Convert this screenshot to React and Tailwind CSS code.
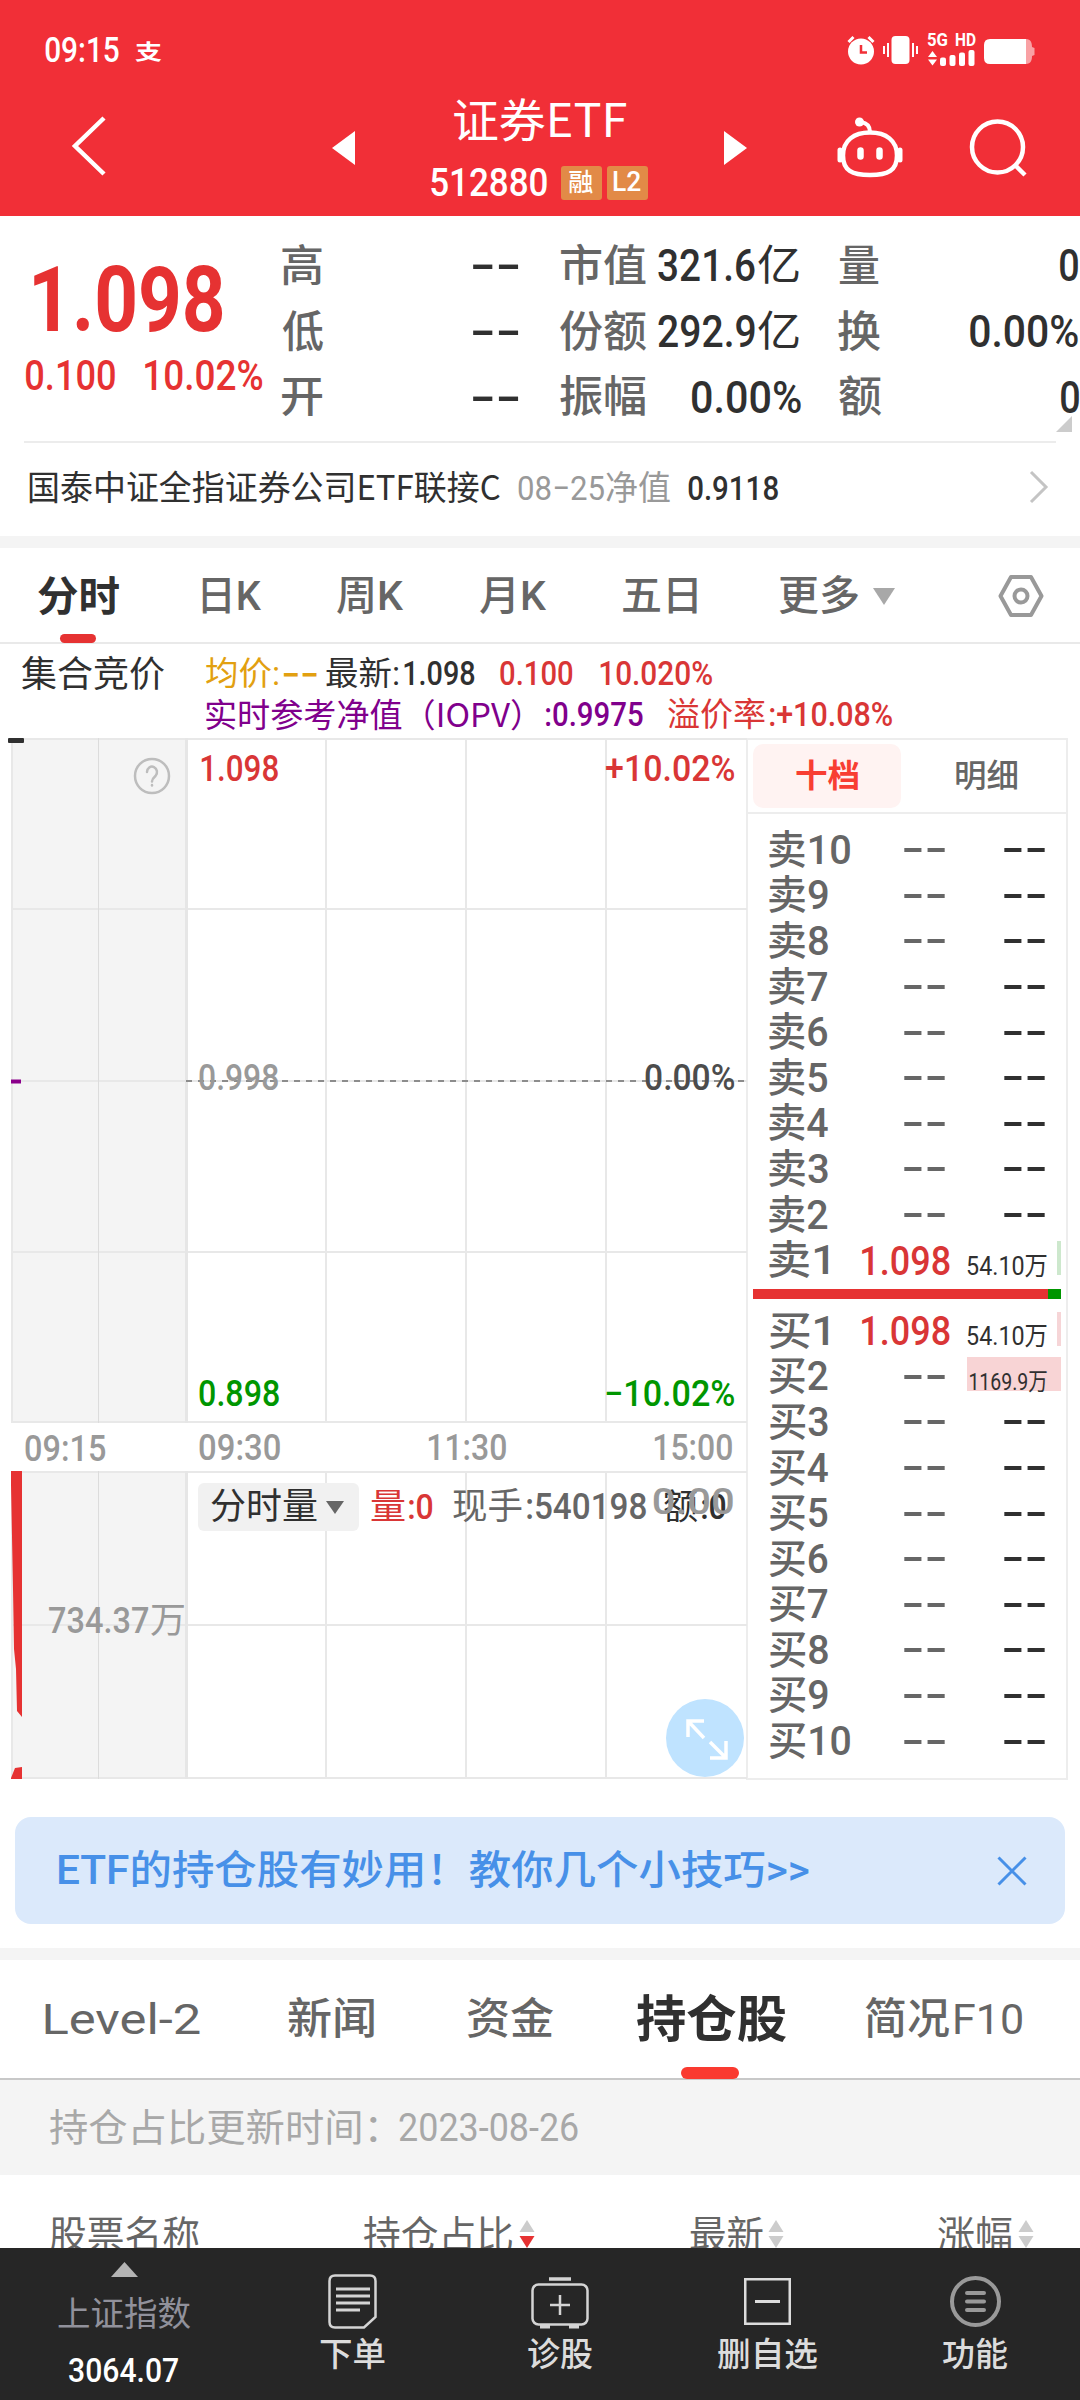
import React, { useLayoutEffect, useRef } from "react";

// Single line of text whose drawn glyphs span exactly the width set on it.
function Fit({ className = "", children }) {
  const box = useRef(null);
  const ink = useRef(null);
  useLayoutEffect(() => {
    const cs = getComputedStyle(ink.current);
    const ctx = document.createElement("canvas").getContext("2d");
    ctx.font = `${cs.fontWeight} ${cs.fontSize} ${cs.fontFamily}`;
    const m = ctx.measureText(children);
    const k = box.current.offsetWidth / (m.actualBoundingBoxLeft + m.actualBoundingBoxRight);
    ink.current.style.transform = `translateX(${m.actualBoundingBoxLeft * k}px) scaleX(${k})`;
  }, [children]);
  return (
    <span ref={box} className={`flex shrink-0 whitespace-nowrap leading-none ${className}`}>
      <span ref={ink} className="inline-block origin-left">{children}</span>
    </span>
  );
}

function StatusIcons() {
  return (
    <svg className="ml-[711px] h-[34px] w-[190px] shrink-0" viewBox="0 0 190 34" fill="#fff">
      <circle cx="14" cy="18.500" r="13" />
      <path d="M1.500 9l5-5M26.500 9l-5-5" stroke="#fff" strokeWidth="3" />
      <path d="M14 12v7.500h6" stroke="#f12f37" strokeWidth="2.500" fill="none" />
      <rect x="44.500" y="3" width="18" height="28" rx="4" />
      <path d="M41 10v14M37 13v8M66 10v14M70 13v8" stroke="#fff" strokeWidth="2" />
      <text x="80" y="13" fontFamily="Roboto" fontWeight="700" fontSize="18" textLength="21" lengthAdjust="spacingAndGlyphs">5G</text>
      <text x="108" y="13" fontFamily="Roboto" fontWeight="700" fontSize="18" textLength="21" lengthAdjust="spacingAndGlyphs">HD</text>
      <path d="M81 24l4.500-6 4.500 6zM81 26.500l4.500 6 4.500-6z" />
      <rect x="93" y="24.500" width="6" height="8.500" rx="2" />
      <rect x="102.500" y="22" width="6" height="11" rx="2" />
      <rect x="112" y="19.500" width="6" height="13.500" rx="2" />
      <rect x="121.500" y="17" width="6" height="16" rx="2" />
      <path d="M178 6h1c5 0 6 4 6 8l2.500 1v7l-2.500 1c0 4-1 8-6 8h-1z" opacity=".55" />
      <path d="M143 6h36v25h-36q-6 0-6-6v-13q0-6 6-6z" />
    </svg>
  );
}

function Header() {
  return (
    <header className="h-[216px] bg-[#f12f37] text-white">
      <div className="flex h-[100px] items-center">
        <Fit className="ml-[45px] w-[74px] text-[35px] font-medium">09:15</Fit>
        <Fit className="ml-[16px] w-[27px] font-['Noto_Sans_CJK_SC'] text-[21px] font-bold">支</Fit>
        <div className="-ml-[26px] flex"><StatusIcons /></div>
      </div>
      <div className="flex h-[116px] items-start">
        <svg className="ml-[70px] mt-[15px] h-[62px] w-[38px] shrink-0" viewBox="0 0 38 62" fill="none" stroke="#fff" strokeWidth="4.500">
          <path d="M34 3L5 31l29 28" />
        </svg>
        <svg className="ml-[224px] mt-[31px] h-[34px] w-[23px] shrink-0" viewBox="0 0 23 34" fill="#fff"><path d="M23 0v34L0 17z" /></svg>
        <div className="ml-[75px] flex w-[218px] shrink-0 flex-col">
          <Fit className="ml-[24px] -mt-[9px] h-[52px] w-[173px] items-center font-['Noto_Sans_CJK_SC'] text-[46px]">证券ETF</Fit>
          <div className="ml-px mt-[23px] flex h-[33px] items-center">
            <Fit className="w-[116px] text-[38px] font-medium">512880</Fit>
            <span className="ml-[14px] flex h-[34px] w-[42px] items-center justify-center rounded-[3px] bg-[#e28a47]">
              <Fit className="w-[24px] text-[25px] font-medium">融</Fit>
            </span>
            <span className="ml-[5px] flex h-[34px] w-[43px] items-center justify-center rounded-[3px] bg-[#e28a47]">
              <Fit className="w-[28px] text-[27px] font-medium">L2</Fit>
            </span>
          </div>
        </div>
        <svg className="ml-[76px] mt-[31px] h-[34px] w-[23px] shrink-0" viewBox="0 0 23 34" fill="#fff"><path d="M0 0v34l23-17z" /></svg>
        <svg className="ml-[88px] mt-[17px] h-[62px] w-[70px] shrink-0" viewBox="0 0 70 62" fill="none" stroke="#fff" strokeWidth="4.500">
          <path d="M35 15.500c16 0 27 8 27 23s-9 19.500-27 19.500S8 53.500 8 38.500s11-23 27-23z" />
          <path d="M35 15c0-6-3-9-9-10" strokeWidth="4" />
          <circle cx="24.500" cy="5" r="4.500" fill="#fff" stroke="none" />
          <path d="M25.500 33.500v6M44.500 33.500v6" strokeWidth="6.500" strokeLinecap="round" />
          <path d="M5 33v10M65 33v10" strokeWidth="5" strokeLinecap="round" />
        </svg>
        <svg className="ml-[64px] mt-[18px] h-[60px] w-[60px] shrink-0" viewBox="0 0 60 60" fill="none" stroke="#fff" strokeWidth="4.500">
          <circle cx="28.500" cy="29" r="25.500" /><path d="M46 47l10 10" />
        </svg>
      </div>
    </header>
  );
}

const dash = "font-['Noto_Sans_CJK_SC'] font-bold";

function Quote() {
  const lab = "text-[43px] font-medium text-[#666]";
  const val = "text-[44px] font-medium text-[#303030]";
  const none = `mb-[10px] w-[46px] text-[42px] text-[#303030] ${dash}`;
  return (
    <section className="relative h-[225px] overflow-hidden border-b-2 border-transparent">
      <div className="flex">
        <div className="w-[282px] shrink-0 text-[#e63232]">
          <Fit className="ml-[34px] mt-[39px] w-[189px] text-[91px] font-bold">1.098</Fit>
          <div className="mt-[9px] flex">
            <Fit className="ml-[26px] w-[89px] text-[42px] font-medium">0.100</Fit>
            <Fit className="ml-[30px] w-[118px] text-[42px] font-medium">10.02%</Fit>
          </div>
        </div>
        <div className="mt-[17px]">
          <div className="flex h-[66px] items-center">
            <Fit className={`w-[40px] ${lab}`}>高</Fit>
            <Fit className={`ml-[151px] ${none}`}>--</Fit>
            <Fit className={`ml-[42px] w-[85px] ${lab}`}>市值</Fit>
            <Fit className={`ml-[12px] w-[97px] ${val}`}>321.6</Fit>
            <Fit className="ml-[3px] w-[41px] text-[42px] text-[#303030]">亿</Fit>
            <Fit className={`ml-[40px] w-[40px] ${lab}`}>量</Fit>
            <Fit className={`ml-[181px] w-[18px] ${val}`}>0</Fit>
          </div>
          <div className="flex h-[66px] items-center">
            <Fit className={`w-[41px] ${lab}`}>低</Fit>
            <Fit className={`ml-[150px] ${none}`}>--</Fit>
            <Fit className={`ml-[41px] w-[86px] ${lab}`}>份额</Fit>
            <Fit className={`ml-[12px] w-[97px] ${val}`}>292.9</Fit>
            <Fit className="ml-[3px] w-[41px] text-[42px] text-[#303030]">亿</Fit>
            <Fit className={`ml-[39px] w-[42px] ${lab}`}>换</Fit>
            <Fit className={`ml-[90px] w-[108px] ${val}`}>0.00%</Fit>
          </div>
          <div className="flex h-[65px] items-center">
            <Fit className={`w-[40px] ${lab}`}>开</Fit>
            <Fit className={`ml-[151px] ${none}`}>--</Fit>
            <Fit className={`ml-[41px] w-[85px] ${lab}`}>振幅</Fit>
            <Fit className={`ml-[47px] w-[109px] ${val}`}>0.00%</Fit>
            <Fit className={`ml-[38px] w-[42px] ${lab}`}>额</Fit>
            <Fit className={`ml-[180px] w-[18px] ${val}`}>0</Fit>
          </div>
        </div>
      </div>
      <svg className="absolute right-[8px] top-[200px] size-[16px]" viewBox="0 0 16 16" fill="#ccc"><path d="M16 0v16H0z" /></svg>
    </section>
  );
}

function FundRow() {
  return (
    <section>
      <div className="mx-[24px] h-[2px] bg-[#ececec]" />
      <div className="flex h-[93px] items-center pb-[4px]">
        <Fit className="mb-[3px] ml-[29px] w-[471px] font-['Noto_Sans_CJK_SC'] text-[34px] text-[#303030]">国泰中证全指证券公司ETF联接C</Fit>
        <Fit className="ml-[18px] w-[86px] text-[34px] text-[#999]">08−25</Fit>
        <Fit className="ml-[2px] w-[64px] text-[34px] text-[#999]">净值</Fit>
        <Fit className="ml-[18px] w-[90px] text-[34px] font-medium text-[#303030]">0.9118</Fit>
        <svg className="mb-[2px] ml-[251px] h-[34px] w-[20px]" viewBox="0 0 20 34" fill="none" stroke="#c4c4c4" strokeWidth="3"><path d="M2 2l15 15L2 32" /></svg>
      </div>
      <div className="h-[12px] bg-[#f4f4f4]" />
    </section>
  );
}

function ChartTabs() {
  const t = "text-[41px] text-[#666] font-medium";
  return (
    <nav className="flex h-[96px] items-start border-b-2 border-[#e9e9e9]">
      <div className="ml-[38px] flex h-[95px] w-[81px] flex-col items-center justify-between">
        <Fit className="mt-[29px] w-[81px] text-[41px] font-bold text-[#303030]">分时</Fit>
        <span className="mr-[2px] h-[9px] w-[36px] rounded-full bg-[#e63232]" />
      </div>
      <div className="flex h-[96px] items-center">
        <Fit className={`ml-[83px] w-[60px] ${t}`}>日K</Fit>
        <Fit className={`ml-[75px] w-[67px] ${t}`}>周K</Fit>
        <Fit className={`ml-[76px] w-[67px] ${t}`}>月K</Fit>
        <Fit className={`ml-[76px] w-[74px] ${t}`}>五日</Fit>
        <Fit className={`ml-[82px] w-[79px] ${t}`}>更多</Fit>
        <svg className="ml-[15px] h-[18px] w-[22px]" viewBox="0 0 22 18" fill="#a8a8a8"><path d="M0 1h22L11 18z" /></svg>
        <svg className="mb-px ml-[103px] h-[44px] w-[46px]" viewBox="0 0 46 44" fill="none" stroke="#999" strokeWidth="4" strokeLinejoin="round">
          <path d="M13 3h20l10.500 19L33 41H13L2.500 22z" /><circle cx="23" cy="22" r="6.500" />
        </svg>
      </div>
    </nav>
  );
}

function Legend() {
  return (
    <section className="flex h-[94px] items-start">
      <Fit className="ml-[22px] mt-[13px] w-[142px] text-[36px] text-[#303030]">集合竞价</Fit>
      <div className="ml-[42px] mt-[9px]">
        <div className="flex h-[41px] items-center">
          <Fit className="w-[72px] text-[33px] text-[#e2a010]">均价:</Fit>
          <Fit className={`mb-[7px] ml-[5px] w-[34px] text-[33px] text-[#e2a010] ${dash}`}>--</Fit>
          <Fit className="ml-[9px] w-[72px] text-[33px] text-[#303030]">最新:</Fit>
          <Fit className="ml-[6px] w-[71px] text-[33px] font-medium text-[#303030]">1.098</Fit>
          <Fit className="ml-[25px] w-[73px] text-[33px] font-medium text-[#d93636]">0.100</Fit>
          <Fit className="ml-[27px] w-[112px] text-[33px] font-medium text-[#d93636]">10.020%</Fit>
        </div>
        <div className="flex h-[40px] items-center">
          <Fit className="mb-[2px] w-[315px] font-['Noto_Sans_CJK_SC'] text-[33px] text-[#80008c]">实时参考净值（IOPV）</Fit>
          <Fit className="ml-[25px] w-[97px] text-[33px] font-medium text-[#80008c]">:0.9975</Fit>
          <Fit className="ml-[25px] w-[97px] text-[33px] text-[#d93636]">溢价率</Fit>
          <Fit className="ml-[5px] w-[122px] text-[33px] font-medium text-[#d93636]">:+10.08%</Fit>
        </div>
      </div>
    </section>
  );
}

// Grid lines shared by the price chart and the volume chart.
function Grid({ height, rows, className }) {
  return (
    <svg className={className} viewBox={`0 0 736 ${height}`} fill="none">
      <rect x="0" y="0" width="175" height={height} fill="#f4f4f4" />
      {rows.map((y) => <path key={y} d={`M0 ${y}H736`} stroke="#e8e8e8" strokeWidth="2" />)}
      <path d={`M1 0V${height}M315 0V${height}M455 0V${height}M595 0V${height}`} stroke="#e8e8e8" strokeWidth="2" />
      <path d={`M87.500 0V${height}`} stroke="#dcdcdc" />
      <path d={`M175.500 0V${height}`} stroke="#e6e6e6" strokeWidth="3" />
    </svg>
  );
}

function Charts() {
  const n = "text-[36px] font-medium";
  return (
    <div className="ml-[11px] w-[736px] shrink-0">
      <div className="relative h-[685px]">
        <Grid className="absolute inset-0 h-[685px] w-[736px]" height={685} rows={[1, 171, 343, 514, 684]} />
        <svg className="absolute -left-[3px] top-0 h-[685px] w-[739px]" viewBox="0 0 739 685">
          <rect x="0" y="0" width="16" height="5" rx="1" fill="#303030" />
          <rect x="3" y="341.500" width="10" height="4" fill="#8b008b" />
          <path d="M178 343H739" stroke="#8c8c8c" strokeWidth="2" strokeDasharray="6 6" />
          <g fill="none" stroke="#bdbdbd" strokeWidth="2.500" strokeLinecap="round">
            <circle cx="144" cy="38" r="17" />
            <path d="M139 34a5 5.500 0 1 1 8.500 4c-2 1.800-3.500 3-3.500 5.500" /><path d="M144 47v.5" />
          </g>
        </svg>
        <div className="relative flex h-[685px] flex-col justify-between pb-[11px] pl-[188px] pr-[13px] pt-[13px]">
          <div className="flex justify-between text-[#d93636]">
            <Fit className={`ml-[2px] w-[77px] ${n}`}>1.098</Fit><Fit className={`w-[128px] ${n}`}>+10.02%</Fit>
          </div>
          <div className="-mt-[7px] flex justify-between">
            <Fit className={`w-[79px] text-[#999] ${n}`}>0.998</Fit><Fit className={`w-[89px] text-[#4c4c4c] ${n}`}>0.00%</Fit>
          </div>
          <div className="flex justify-between text-[#009600]">
            <Fit className={`w-[80px] ${n}`}>0.898</Fit><Fit className={`w-[128px] ${n}`}>−10.02%</Fit>
          </div>
        </div>
      </div>
      <div className="flex h-[48px] items-center pt-[2px] text-[36px] font-medium text-[#999]">
        <Fit className="ml-[14px] mt-[1px] w-[80px]">09:15</Fit>
        <Fit className="ml-[94px] w-[81px]">09:30</Fit>
        <Fit className="ml-[148px] w-[78px]">11:30</Fit>
        <Fit className="ml-[148px] w-[78px]">15:00</Fit>
      </div>
      <div className="relative h-[308px]">
        <Grid className="absolute inset-0 h-[308px] w-[736px]" height={308} rows={[1, 154, 307]} />
        <svg className="absolute left-0 top-0 h-[308px] w-[11px]" viewBox="0 0 11 308" fill="#e63232">
          <path d="M0 0h11v246l-5-6-1-42-2-20-1-60L0 14zM0 308v-1l4-10 7-1v12z" />
        </svg>
        <div className="relative flex h-[308px] flex-col">
          <div className="relative ml-[187px] mt-[12px] flex h-[48px] items-center">
            <span className="flex h-[48px] w-[161px] shrink-0 items-center rounded-[6px] bg-[#f1f1f1]">
              <Fit className="ml-[13px] w-[106px] text-[36px] text-[#303030]">分时量</Fit>
              <svg className="ml-[9px] h-[13px] w-[18px]" viewBox="0 0 18 13" fill="#666"><path d="M0 0h18L9 13z" /></svg>
            </span>
            <Fit className="ml-[12px] w-[34px] text-[35px] text-[#d93636]">量</Fit>
            <Fit className="ml-[4px] w-[24px] text-[35px] font-medium text-[#d93636]">:0</Fit>
            <Fit className="ml-[20px] w-[69px] text-[36px] text-[#666]">现手</Fit>
            <Fit className="ml-[5px] w-[119px] text-[36px] font-medium text-[#666]">:540198</Fit>
            <Fit className="ml-[18px] w-[34px] text-[35px] text-[#303030]">额</Fit>
            <Fit className="ml-[4px] w-[24px] text-[35px] font-medium text-[#303030]">:0</Fit>
            <Fit className="absolute right-[14px] top-px w-[80px] text-[36px] font-medium text-[#999]">0.00</Fit>
          </div>
          <div className="ml-[38px] mt-[72px] flex text-[36px] text-[#999]">
            <Fit className="w-[99px] font-medium">734.37</Fit>
            <Fit className="ml-[3px] w-[33px]">万</Fit>
          </div>
        </div>
        <svg className="absolute right-[3px] top-[228px] size-[78px]" viewBox="0 0 78 78" fill="none" stroke="#fff" strokeWidth="3.500">
          <circle cx="39" cy="39" r="39" fill="#bfe3ff" stroke="none" />
          <path d="M22 38V22h16M22 22l16 17M60 42v17H44M60 59L44 43" />
        </svg>
      </div>
    </div>
  );
}

function BookRow({ label, price, amount, wide, bar }) {
  return (
    <div className="relative flex h-[45.600px] items-center">
      {bar}
      <Fit className={`ml-[21px] text-[40px] font-medium text-[#666] ${wide ? "w-[81px]" : "w-[59px]"}`}>{label}</Fit>
      <span className="relative ml-auto flex items-center">
        {price
          ? <Fit className="mr-[17px] w-[88px] text-[41px] font-medium text-[#d93636]">{price}</Fit>
          : <Fit className={`mb-[11px] w-[43px] text-[38px] text-[#666] ${amount ? "mr-[24px]" : "mr-[57px]"} ${dash}`}>--</Fit>}
        {amount
          ? <Fit className={`mr-[19px] mt-[9px] text-[#303030] ${price ? "w-[80px] text-[26px]" : "w-[77px] text-[24px]"}`}>{amount}</Fit>
          : <Fit className={`mb-[11px] mr-[20px] w-[43px] text-[38px] text-[#303030] ${dash}`}>--</Fit>}
      </span>
    </div>
  );
}

function OrderBook() {
  return (
    <aside className="-ml-px flex h-[1042px] w-[322px] flex-col border-2 border-[#ededed] bg-white">
      <div className="flex h-[74px] shrink-0 items-center border-b-2 border-[#ededed]">
        <span className="ml-[5px] flex h-[64px] w-[148px] items-center justify-center rounded-[10px] bg-[#fff3f2]">
          <Fit className="w-[63px] text-[32px] font-bold text-[#f83e32]">十档</Fit>
        </span>
        <Fit className="ml-[55px] w-[61px] text-[32px] font-medium text-[#666]">明细</Fit>
      </div>
      <div className="mt-[14px]">
        {[10, 9, 8, 7, 6, 5, 4, 3, 2].map((n) => <BookRow key={n} label={`卖${n}`} wide={n === 10} />)}
        <BookRow label="卖1" price="1.098" amount="54.10万" bar={<i className="absolute right-[5px] top-[3px] h-[34px] w-[4px] bg-[#cde8cd]" />} />
      </div>
      <div className="ml-[5px] mt-[5px] flex h-[10px] w-[308px] shrink-0">
        <span className="flex-1 bg-[#e63232]" /><span className="w-[13px] bg-[#009600]" />
      </div>
      <div className="mt-[10px]">
        <BookRow label="买1" price="1.098" amount="54.10万" bar={<i className="absolute right-[5px] top-[3px] h-[34px] w-[4px] bg-[#f6d5d7]" />} />
        <BookRow label="买2" amount="1169.9万" bar={<i className="absolute right-[5px] top-[2px] h-[34px] w-[94px] bg-[#f8d4d5]" />} />
        {[3, 4, 5, 6, 7, 8, 9, 10].map((n) => <BookRow key={n} label={`买${n}`} wide={n === 10} />)}
      </div>
    </aside>
  );
}

function Banner() {
  return (
    <section>
      <div className="mx-[15px] mt-[37px] flex h-[107px] items-center rounded-[16px] bg-[#dbe9fb]">
        <Fit className="ml-[43px] w-[751px] text-[40px] font-medium text-[#4790e8]">{"ETF的持仓股有妙用！教你几个小技巧>>"}</Fit>
        <svg className="ml-[188px] size-[30px]" viewBox="0 0 30 30" stroke="#4790e8" strokeWidth="3"><path d="M1.500 1.500l27 27M28.500 1.500l-27 27" /></svg>
      </div>
      <div className="mt-[24px] h-[12px] bg-[#f4f4f4]" />
    </section>
  );
}

function InfoTabs() {
  const t = "text-[43px] text-[#666]";
  return (
    <nav className="flex h-[120px] items-start border-b-2 border-[#c8c8c8]">
      <div className="flex h-[118px] items-center">
        <Fit className={`ml-[45px] w-[155px] ${t}`}>Level-2</Fit>
        <Fit className={`ml-[88px] w-[86px] font-medium ${t}`}>新闻</Fit>
        <Fit className={`ml-[93px] w-[86px] font-medium ${t}`}>资金</Fit>
      </div>
      <div className="ml-[84px] flex h-[119px] w-[149px] flex-col items-center justify-between">
        <Fit className="mt-[35px] w-[149px] text-[50px] font-bold text-[#303030]">持仓股</Fit>
        <span className="mr-[4px] h-[12px] w-[58px] rounded-full bg-[#fa3a30]" />
      </div>
      <div className="flex h-[118px] items-center">
        <Fit className={`ml-[79px] w-[84px] font-medium ${t}`}>简况</Fit>
        <Fit className={`ml-[6px] w-[67px] ${t}`}>F10</Fit>
      </div>
    </nav>
  );
}

function Sort({ down = "#ccc" }) {
  return (
    <svg className="h-[28px] w-[16px]" viewBox="0 0 16 28">
      <path d="M8 0l7.500 12H.5z" fill="#ccc" /><path d="M.5 16h15L8 28z" fill={down} />
    </svg>
  );
}

function Holdings() {
  const t = "text-[38px] text-[#666]";
  return (
    <section className="h-[168px] overflow-hidden">
      <div className="flex h-[95px] items-center bg-[#f4f4f4] text-[38px] text-[#a8a8a8]">
        <Fit className="ml-[50px] w-[327px]">持仓占比更新时间：</Fit>
        <Fit className="ml-[22px] w-[179px]">2023-08-26</Fit>
      </div>
      <div className="mt-[41px] flex h-[40px] items-start">
        <Fit className={`ml-[50px] w-[149px] ${t}`}>股票名称</Fit>
        <Fit className={`ml-[165px] w-[148px] ${t}`}>持仓占比</Fit>
        <div className="ml-[7px] mt-[4px]"><Sort down="#e63232" /></div>
        <Fit className={`ml-[155px] w-[73px] ${t}`}>最新</Fit>
        <div className="ml-[5px] mt-[4px]"><Sort /></div>
        <Fit className={`ml-[154px] w-[74px] ${t}`}>涨幅</Fit>
        <div className="ml-[6px] mt-[4px]"><Sort /></div>
      </div>
    </section>
  );
}

function BottomBar() {
  const t = "text-[33px] font-medium text-[#dcdcdc]";
  return (
    <footer className="flex h-[152px] items-start bg-[#262626]">
      <div className="ml-[58px] flex w-[133px] flex-col items-center">
        <svg className="mt-[14px] h-[15px] w-[27px]" viewBox="0 0 27 15" fill="#b4b4b4"><path d="M13.500 0L27 15H0z" /></svg>
        <Fit className="mt-[20px] w-[133px] text-[34px] text-[#91919b]">上证指数</Fit>
        <Fit className="mr-[2px] mt-[22px] w-[109px] text-[34px] font-medium text-white">3064.07</Fit>
      </div>
      <div className="ml-[129px] flex w-[65px] flex-col items-center">
        <svg className="mt-[26px] h-[55px] w-[49px]" viewBox="0 0 49 55" fill="none" stroke="#d4d4d4" strokeWidth="2.500">
          <path d="M7 1.500h35q5.500 0 5.500 5.500v36L36 53.500H7q-5.500 0-5.500-5.500V7Q1.500 1.500 7 1.500z" />
          <path d="M8 15h34M8 22h34M8 29h34M8 36h24" strokeWidth="3" />
        </svg>
        <Fit className={`mt-[9px] w-[65px] ${t}`}>下单</Fit>
      </div>
      <div className="ml-[143px] flex w-[64px] flex-col items-center">
        <svg className="mt-[28px] h-[53px] w-[58px]" viewBox="0 0 58 53" fill="none" stroke="#d4d4d4" strokeWidth="2.500">
          <rect x="1.500" y="8.500" width="55" height="40" rx="6" />
          <path d="M18 3h22" strokeWidth="3.500" /><path d="M19 29h20M29 19v20" />
          <path d="M9 50.500h10M38 50.500h10" strokeWidth="4" />
        </svg>
        <Fit className={`mt-[9px] w-[64px] ${t}`}>诊股</Fit>
      </div>
      <div className="ml-[126px] flex w-[99px] flex-col items-center">
        <svg className="mt-[30px] h-[47px] w-[47px]" viewBox="0 0 47 47" fill="none" stroke="#dcdcdc" strokeWidth="2.500">
          <rect x="1.250" y="1.250" width="44.500" height="44.500" /><path d="M11 23.500h25" strokeWidth="3" />
        </svg>
        <Fit className={`mt-[13px] w-[99px] ${t}`}>删自选</Fit>
      </div>
      <div className="ml-[126px] flex w-[64px] flex-col items-center">
        <svg className="mt-[28px] h-[51px] w-[51px]" viewBox="0 0 51 51" fill="none" stroke="#999" strokeWidth="4">
          <circle cx="25.500" cy="25.500" r="23.500" /><path d="M17 17h17M17 25.500h17M17 34h17" strokeLinecap="round" />
        </svg>
        <Fit className={`mt-[11px] w-[64px] ${t}`}>功能</Fit>
      </div>
    </footer>
  );
}

export default function App() {
  return (
    <main className="h-[2400px] w-[1080px] overflow-hidden bg-white font-[Roboto,'Noto_Sans_CJK_SC',sans-serif]">
      <Header />
      <Quote />
      <FundRow />
      <ChartTabs />
      <Legend />
      <div className="flex h-[1042px]">
        <Charts />
        <OrderBook />
      </div>
      <Banner />
      <InfoTabs />
      <Holdings />
      <BottomBar />
    </main>
  );
}
